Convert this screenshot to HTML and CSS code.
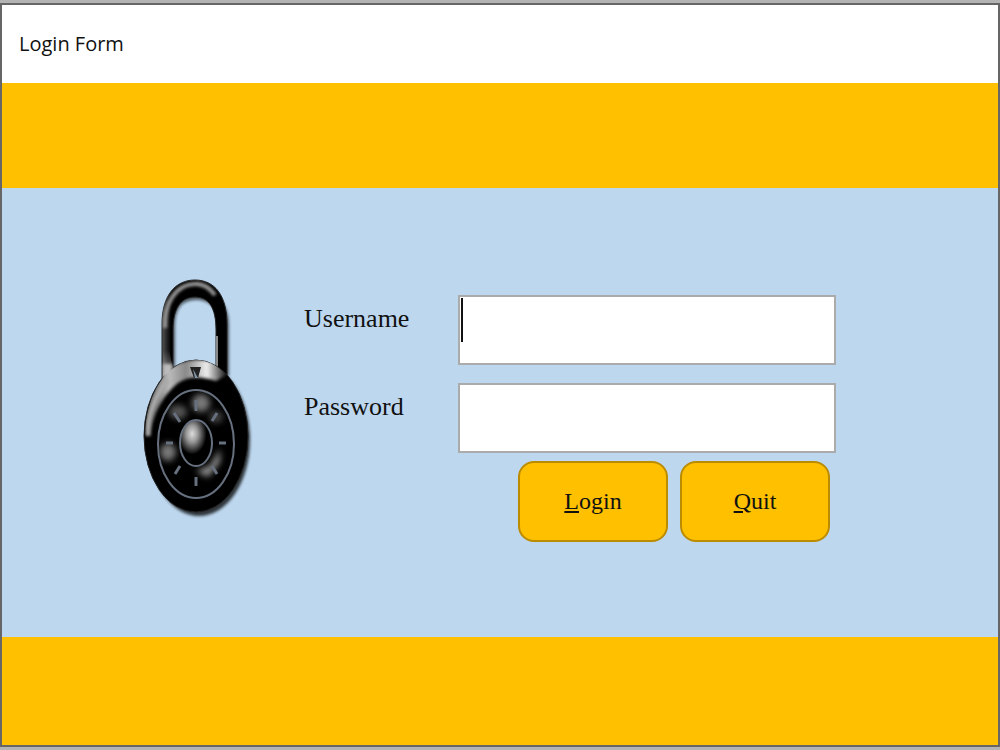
FILE: index.html
```html
<!DOCTYPE html>
<html lang="en">

<head>
    <meta charset="utf-8">
    <title>Login Form</title>
    <link rel="stylesheet" href="styles.css">
</head>

<body>
    <div class="window">
        <h1 class="titleBar">Login Form</h1>
        <div class="band"></div>
        <main class="content">
            <svg class="lock" width="120" height="248" viewBox="0 0 120 248" aria-hidden="true">
                <defs>
                    <linearGradient id="shackle" x1="0" y1="0" x2="1" y2="0">
                        <stop offset="0" stop-color="#555" />
                        <stop offset="0.08" stop-color="#222" />
                        <stop offset="0.14" stop-color="#000" />
                        <stop offset="1" stop-color="#000" />
                    </linearGradient>
                    <linearGradient id="base" x1="0" y1="0" x2="0" y2="1">
                        <stop offset="0" stop-color="#bbb" stop-opacity="0" />
                        <stop offset="1" stop-color="#bbb" />
                    </linearGradient>
                    <linearGradient id="cap" x1="0" y1="0" x2="1" y2="0">
                        <stop offset="0" stop-color="#333" />
                        <stop offset="0.3" stop-color="#bbb" />
                        <stop offset="0.5" stop-color="#888" />
                        <stop offset="0.75" stop-color="#eee" />
                        <stop offset="0.88" stop-color="#777" />
                        <stop offset="1" stop-color="#000" />
                    </linearGradient>
                    <radialGradient id="knob" cx="0.38" cy="0.3" r="0.45">
                        <stop offset="0" stop-color="#ddd" />
                        <stop offset="0.4" stop-color="#999" />
                        <stop offset="1" stop-color="#000" />
                    </radialGradient>
                    <filter id="soft" x="-50%" y="-50%" width="200%" height="200%">
                        <feGaussianBlur stdDeviation="3" />
                    </filter>
                    <filter id="edge" x="-50%" y="-50%" width="200%" height="200%">
                        <feGaussianBlur stdDeviation="1.5" />
                    </filter>
                    <clipPath id="body">
                        <ellipse cx="60" cy="160" rx="51" ry="76" />
                    </clipPath>
                    <clipPath id="dial">
                        <ellipse cx="60" cy="168" rx="37" ry="54" />
                    </clipPath>
                </defs>

                <!-- shadow -->
                <ellipse cx="63" cy="164" rx="51" ry="76" opacity="0.75" filter="url(#edge)" />
                <path d="M34 100V50C34 26 46 19 60 19S88 28 88 48V100" fill="none" stroke="#000" stroke-width="10" opacity="0.6" filter="url(#edge)" />

                <!-- shackle -->
                <path d="M26 112V48C26 20 39 4 59 4S91 20 91 48V112H80V54C80 32 73 21 59 21S37 32 37 54V112Z" fill="url(#shackle)" stroke="#222" />
                <path d="M29 52C28 28 39 9 58 8C67 7 73 11 79 19" fill="none" stroke="#999" stroke-width="4" filter="url(#edge)" />
                <path d="M27 74H33L37 92V112H27Z" fill="url(#base)" />
                <path d="M81 60V92" stroke="#888" stroke-width="2" />

                <!-- body -->
                <ellipse cx="60" cy="160" rx="52" ry="76" fill="#000" stroke="#222" />
                <path d="M27 88H36V98L28 112Z" fill="#bbb" filter="url(#edge)" />
                <g clip-path="url(#body)">
                    <path d="M8 150C8 110 30 84 60 84S92 92 92 98L80 105C67 101 54 99 42 107C28 119 19 133 14 158Z" fill="url(#cap)" filter="url(#edge)" />
                    <path d="M12 160C11 140 19 119 32 104" fill="none" stroke="#aaa" stroke-width="5" filter="url(#edge)" />
                </g>
                <path d="M54 91H65L62 102H58Z" fill="#222" />
                <path d="M57 93L62 102H59Z" fill="#8497a8" />

                <!-- dial -->
                <ellipse cx="60" cy="168" rx="38" ry="54" fill="#000" stroke="#66707e" stroke-width="2" />
                <g clip-path="url(#dial)">
                    <g filter="url(#soft)">
                        <ellipse cx="65" cy="127" rx="9" ry="9" fill="#777" />
                        <ellipse cx="42" cy="136" rx="9" ry="7" fill="#555" />
                        <ellipse cx="32" cy="176" rx="8" ry="9" fill="#777" />
                        <path d="M60 195L74 190L84 173L84 186L72 201Z" fill="#999" />
                        <ellipse cx="80" cy="141" rx="7" ry="6" fill="#444" />
                    </g>
                </g>
                <path d="M60 124V135M60 201V210M30 167H37M83 167H90M38 137L44 146M81 137L76 145M39 198L44 190M76 190L81 198" stroke="#66707e" stroke-width="3" />
                <ellipse cx="60" cy="167" rx="16" ry="23" fill="url(#knob)" stroke="#66707e" stroke-width="2" />
            </svg>

            <form class="loginForm">
                <label for="username">Username</label>
                <div class="fieldBox">
                    <input type="text" id="username" class="field" autofocus>
                    <span class="caret"></span>
                </div>
                <label for="password">Password</label>
                <div class="fieldBox">
                    <input type="password" id="password" class="field">
                </div>
                <div class="buttons">
                    <button type="submit" class="button" accesskey="l"><u>L</u>ogin</button>
                    <button type="button" class="button" accesskey="q"><u>Q</u>uit</button>
                </div>
            </form>
        </main>
        <div class="band bandBottom"></div>
    </div>
</body>

</html>
```

FILE: styles.css
```css
* {
    box-sizing: border-box;
}

body {
    display: flex;
    min-height: 100vh;
    margin: 0;
    padding: 3px 0;
    background-color: #b4b4b4;
    font-family: "Liberation Serif", "Times New Roman", serif;
    color: #111;
}

.window {
    display: flex;
    flex-direction: column;
    flex: 1;
    border: 2px solid #666;
}

.titleBar {
    margin: 0;
    padding: 0 17px;
    background-color: white;
    font-family: "Open Sans", "Segoe UI", sans-serif;
    font-size: 20px;
    font-weight: normal;
    line-height: 78px;
}

.band {
    height: 105px;
    background-color: #ffc000;
}

.bandBottom {
    height: 108px;
}

.content {
    display: flex;
    flex: 1;
    align-items: flex-start;
    gap: 48px;
    padding: 88px 162px 87px 134px;
    background-color: #bdd7ee;
}

.lock {
    flex: none;
}

.loginForm {
    display: grid;
    flex: 1;
    grid-template-columns: 154px 1fr;
    row-gap: 18px;
    padding-top: 19px;
}

.loginForm label {
    font-size: 26px;
    line-height: 48px;
}

.fieldBox {
    position: relative;
}

.field {
    display: block;
    width: 100%;
    height: 70px;
    padding: 0 3px 24px;
    border: 2px solid #ababab;
    background-color: white;
    font-family: inherit;
    font-size: 40px;
    caret-color: transparent;
    outline: none;
}

.caret {
    position: absolute;
    top: 3px;
    left: 3px;
    width: 2px;
    height: 44px;
    background-color: #111;
}

.buttons {
    display: flex;
    grid-column: 2;
    justify-content: flex-end;
    gap: 12px;
    margin-top: -10px;
    padding-right: 6px;
}

.button {
    width: 150px;
    height: 81px;
    border: 2px solid #bc8c00;
    border-radius: 16px;
    background-color: #ffc000;
    color: #111;
    font-family: inherit;
    font-size: 24px;
    cursor: pointer;
}
```
